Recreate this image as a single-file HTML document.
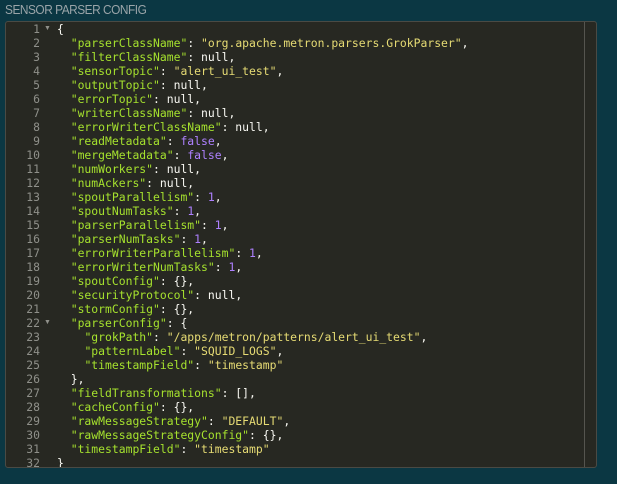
<!DOCTYPE html>
<html><head><style>
body{margin:0;background:#0b3743;width:617px;height:484px;overflow:hidden;font-family:"Liberation Sans",sans-serif}
.t{position:absolute;left:5px;top:3px;color:#9aa4a8;font-size:12.5px;letter-spacing:-0.5px;transform:scaleX(0.95);transform-origin:left}
.ed{position:absolute;left:5px;top:21px;width:592px;height:447px;background:#272822;border:1px solid #4a4a44;border-radius:3px;box-sizing:border-box;overflow:hidden}
.pm{position:absolute;left:578px;top:0;bottom:0;width:1px;background:#55554f}
pre{margin:0;position:absolute;top:0;left:0;font-family:"DejaVu Sans Mono",monospace;font-size:11.4px;line-height:14px}
.g{color:#8f908a;text-align:right;width:34px}
.c{left:51px;color:#f8f8f2}
.k{color:#a6e22e}.s{color:#e6db74}.n{color:#ae81ff}
.f{position:absolute;left:38px;color:#8f908a;font-size:7px}
</style></head><body>
<div class="t">SENSOR PARSER CONFIG</div>
<div class="ed"><div class="pm"></div>
<pre class="g">1
2
3
4
5
6
7
8
9
10
11
12
13
14
15
16
17
18
19
20
21
22
23
24
25
26
27
28
29
30
31
32</pre>
<div class="f" style="top:3px">▼</div><div class="f" style="top:297px">▼</div>
<pre class="c">{
  <span class="k">"parserClassName"</span>: <span class="s">"org.apache.metron.parsers.GrokParser"</span>,
  <span class="k">"filterClassName"</span>: null,
  <span class="k">"sensorTopic"</span>: <span class="s">"alert_ui_test"</span>,
  <span class="k">"outputTopic"</span>: null,
  <span class="k">"errorTopic"</span>: null,
  <span class="k">"writerClassName"</span>: null,
  <span class="k">"errorWriterClassName"</span>: null,
  <span class="k">"readMetadata"</span>: <span class="n">false</span>,
  <span class="k">"mergeMetadata"</span>: <span class="n">false</span>,
  <span class="k">"numWorkers"</span>: null,
  <span class="k">"numAckers"</span>: null,
  <span class="k">"spoutParallelism"</span>: <span class="n">1</span>,
  <span class="k">"spoutNumTasks"</span>: <span class="n">1</span>,
  <span class="k">"parserParallelism"</span>: <span class="n">1</span>,
  <span class="k">"parserNumTasks"</span>: <span class="n">1</span>,
  <span class="k">"errorWriterParallelism"</span>: <span class="n">1</span>,
  <span class="k">"errorWriterNumTasks"</span>: <span class="n">1</span>,
  <span class="k">"spoutConfig"</span>: {},
  <span class="k">"securityProtocol"</span>: null,
  <span class="k">"stormConfig"</span>: {},
  <span class="k">"parserConfig"</span>: {
    <span class="k">"grokPath"</span>: <span class="s">"/apps/metron/patterns/alert_ui_test"</span>,
    <span class="k">"patternLabel"</span>: <span class="s">"SQUID_LOGS"</span>,
    <span class="k">"timestampField"</span>: <span class="s">"timestamp"</span>
  },
  <span class="k">"fieldTransformations"</span>: [],
  <span class="k">"cacheConfig"</span>: {},
  <span class="k">"rawMessageStrategy"</span>: <span class="s">"DEFAULT"</span>,
  <span class="k">"rawMessageStrategyConfig"</span>: {},
  <span class="k">"timestampField"</span>: <span class="s">"timestamp"</span>
}</pre>
</div>
</body></html>
